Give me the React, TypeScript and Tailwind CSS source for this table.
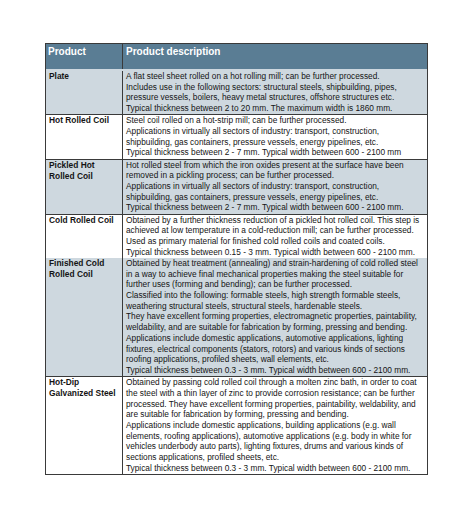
import React from "react";

type Row = { name: string[]; lines: string[]; shaded: boolean; topLine: boolean };

const rows: Row[] = [
  {
    name: ["Plate"],
    shaded: true,
    topLine: false,
    lines: [
      "A flat steel sheet rolled on a hot rolling mill; can be further processed.",
      "Includes use in the following sectors: structural steels, shipbuilding, pipes,",
      "pressure vessels, boilers, heavy metal structures, offshore structures etc.",
      "Typical thickness between 2 to 20 mm. The maximum width is 1860 mm.",
    ],
  },
  {
    name: ["Hot Rolled Coil"],
    shaded: false,
    topLine: true,
    lines: [
      "Steel coil rolled on a hot-strip mill; can be further processed.",
      "Applications in virtually all sectors of industry: transport, construction,",
      "shipbuilding, gas containers, pressure vessels, energy pipelines, etc.",
      "Typical thickness between 2 - 7 mm. Typical width between 600 - 2100 mm",
    ],
  },
  {
    name: ["Pickled Hot", "Rolled Coil"],
    shaded: true,
    topLine: true,
    lines: [
      "Hot rolled steel from which the iron oxides present at the surface have been",
      "removed in a pickling process; can be further processed.",
      "Applications in virtually all sectors of industry: transport, construction,",
      "shipbuilding, gas containers, pressure vessels, energy pipelines, etc.",
      "Typical thickness between 2 - 7 mm. Typical width between 600 - 2100 mm.",
    ],
  },
  {
    name: ["Cold Rolled Coil"],
    shaded: false,
    topLine: true,
    lines: [
      "Obtained by a further thickness reduction of a pickled hot rolled coil. This step is",
      "achieved at low temperature in a cold-reduction mill; can be further processed.",
      "Used as primary material for finished cold rolled coils and coated coils.",
      "Typical thickness between 0.15 - 3 mm. Typical width between 600 - 2100 mm.",
    ],
  },
  {
    name: ["Finished Cold", "Rolled Coil"],
    shaded: true,
    topLine: false,
    lines: [
      "Obtained by heat treatment (annealing) and strain-hardening of cold rolled steel",
      "in a way to achieve final mechanical properties making the steel suitable for",
      "further uses (forming and bending); can be further processed.",
      "Classified into the following: formable steels, high strength formable steels,",
      "weathering structural steels, structural steels, hardenable steels.",
      "They have excellent forming properties, electromagnetic properties, paintability,",
      "weldability, and are suitable for fabrication by forming, pressing and bending.",
      "Applications include domestic applications, automotive applications, lighting",
      "fixtures, electrical components (stators, rotors) and various kinds of sections",
      "roofing applications, profiled sheets, wall elements, etc.",
      "Typical thickness between 0.3 - 3 mm. Typical width between 600 - 2100 mm.",
    ],
  },
  {
    name: ["Hot-Dip", "Galvanized Steel"],
    shaded: false,
    topLine: true,
    lines: [
      "Obtained by passing cold rolled coil through a molten zinc bath, in order to coat",
      "the steel with a thin layer of zinc to provide corrosion resistance; can be further",
      "processed. They have excellent forming properties, paintability, weldability, and",
      "are suitable for fabrication by forming, pressing and bending.",
      "Applications include domestic applications, building applications (e.g. wall",
      "elements, roofing applications), automotive applications (e.g. body in white for",
      "vehicles underbody auto parts), lighting fixtures, drums and various kinds of",
      "sections applications, profiled sheets, etc.",
      "Typical thickness between 0.3 - 3 mm. Typical width between 600 - 2100 mm.",
    ],
  },
];

export default function App() {
  return (
    <div className="w-[474px] h-[512px] bg-white pt-[43px] pl-[45px] font-['Liberation_Sans',Arial,sans-serif]">
      <div className="w-[383px] border border-[#3a3a3a] text-[#141414]">
        <div className="flex h-[25px] bg-[#5a7d94] text-white text-[10px] font-bold leading-[14px]">
          <div className="w-[76px] shrink-0 pl-[2px] pt-[1px]">Product</div>
          <div className="flex-1 border-l border-[#3a3a3a] pl-[3px] pt-[1px]">Product description</div>
        </div>
        {rows.map((r, i) => (
          <div
            key={i}
            className={`flex text-[8.3px] leading-[10.7px] ${r.shaded ? "bg-[#ced8df]" : "bg-white"} ${r.topLine ? "border-t border-[#3a3a3a]" : ""} ${i === 0 ? "pt-[2px]" : ""}`}
          >
            <div className="w-[76px] shrink-0 pl-[3px] font-bold text-[8.4px]">
              {r.name.map((n, j) => (
                <div key={j} className={r.name.length > 1 ? "leading-[11px]" : ""}>{n}</div>
              ))}
            </div>
            <div className="flex-1 border-l border-[#3a3a3a] pl-[3px] pb-[0.5px]">
              {r.lines.map((l, j) => (
                <div key={j} className="whitespace-nowrap">{l}</div>
              ))}
            </div>
          </div>
        ))}
      </div>
    </div>
  );
}
